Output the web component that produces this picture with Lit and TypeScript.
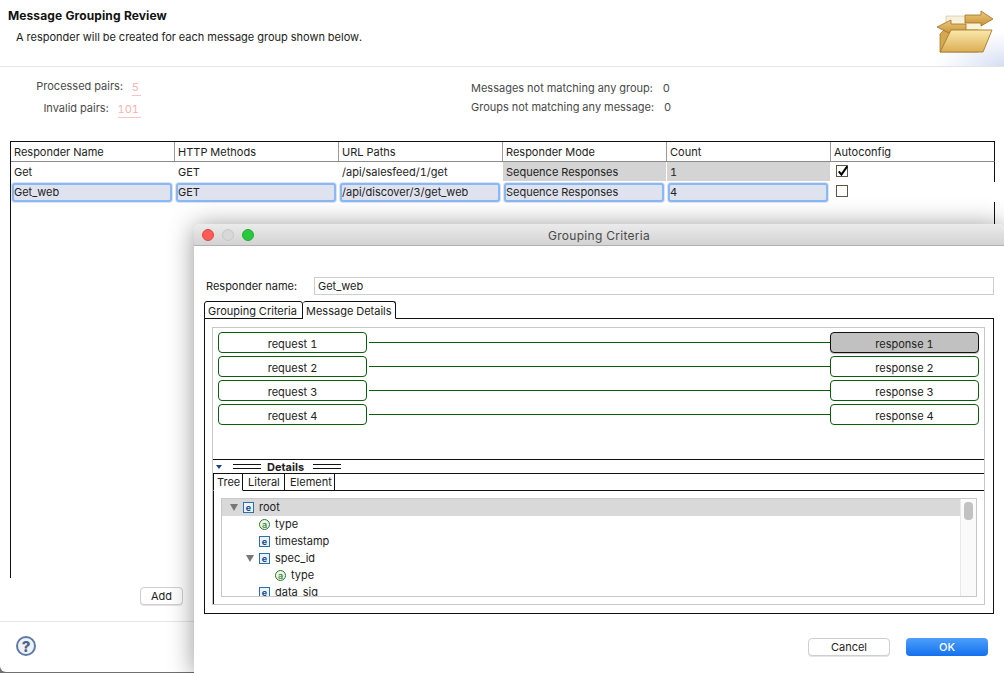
import { LitElement, html, css } from "lit";
import { customElement } from "lit/decorators.js";

const COLS = ["Responder Name", "HTTP Methods", "URL Paths", "Responder Mode", "Count", "Autoconfig"];
const ROWS = [
  { cells: ["Get", "GET", "/api/salesfeed/1/get", "Sequence Responses", "1"], checked: true, focus: false },
  { cells: ["Get_web", "GET", "/api/discover/3/get_web", "Sequence Responses", "4"], checked: false, focus: true },
];
const TREE = [
  { level: 0, twist: true, kind: "e", label: "root", sel: true },
  { level: 1, twist: false, kind: "a", label: "type", sel: false },
  { level: 1, twist: false, kind: "e", label: "timestamp", sel: false },
  { level: 1, twist: true, kind: "e", label: "spec_id", sel: false },
  { level: 2, twist: false, kind: "a", label: "type", sel: false },
  { level: 1, twist: false, kind: "e", label: "data_sig", sel: false },
];

@customElement("app-root")
export class AppRoot extends LitElement {
  static styles = css`
    :host { display: block; width: 1004px; height: 673px; position: relative; overflow: hidden; background: #6f6f6f;
      font: 11px/15px Inter, "Liberation Sans", sans-serif; font-variant-numeric: tabular-nums; color: #222; }
    * { box-sizing: border-box; }
    .base { height: 672px; background: #fff; display: flex; flex-direction: column; border-radius: 0 0 6px 6px; overflow: hidden; }
    .head { height: 67px; border-bottom: 1px solid #e4e4e4; position: relative; padding: 8px 8px 0; flex: none;
      background: radial-gradient(ellipse 70px 34px at 100% 100%, #d5dff2 0%, #eef2fa 55%, #fff 100%); }
    .title { font-weight: 700; font-size: 12px; color: #111; letter-spacing: 0.1px; }
    .sub { margin: 7px 0 0 8px; color: #222; }
    .folder { position: absolute; left: 934px; top: 10px; }
    .stats { height: 74px; flex: none; display: flex; }
    .left { width: 141px; padding-top: 12px; display: flex; flex-direction: column; gap: 6px; }
    .l-row { display: flex; justify-content: flex-end; gap: 9px; color: #4a4a4a; }
    .link { color: #f5b3b3; border-bottom: 1px solid #f8c4c4; padding: 1px 2px 0 0; line-height: 15px; margin-bottom: -1px; }
    .right { margin-left: 330px; padding-top: 14px; display: flex; flex-direction: column; gap: 4px; }
    .r-row { display: flex; gap: 10px; color: #4a4a4a; }
    .table { flex: 1; margin: 0 9px 0 10px; border-left: 1px solid #111; display: flex; flex-direction: column; min-height: 0; }
    .t-head { display: grid; grid-template-columns: repeat(6, 164px); height: 21px; flex: none; border-top: 1px solid #111;
      border-right: 1px solid #111; border-bottom: 1px solid #8a8a8a; }
    .t-head div { padding: 3px 0 0 3px; border-right: 1px solid #9a9a9a; }
    .t-head div:last-child { border-right: 0; }
    .t-row { display: grid; grid-template-columns: repeat(5, 164px) 1fr; height: 20px; flex: none; }
    .t-row.first { border-right: 1px solid #111; }
    .cell { padding: 3px 0 0 3px; border-bottom: 1px solid #fff; border-right: 1px solid #fff; }
    .cell.shade { background: #d4d4d4; }
    .cell.focus { background: #dfe3ef; border: 2px solid #88b9f5; border-radius: 3px; margin: 1px 3px 1px 1px; padding: 0;
      box-shadow: 0 0 0 1px #dfe3ef; line-height: 15px; }
    .check { padding: 3px 0 0 5px; }
    .box { width: 12px; height: 12px; border: 1px solid #5a5a44; background: #fff; display: block; position: relative; }
    .box svg { position: absolute; left: 0; top: -1px; }
    .t-rest { flex: 1; border-right: 1px solid #111; }
    .add-row { height: 43px; flex: none; padding: 9px 0 0 140px; }
    .btn { display: flex; align-items: center; justify-content: center; height: 18px; background: #fff; border: 1px solid #cfcfcf;
      border-radius: 4px; color: #222; box-shadow: 0 1px 0 #e4e4e4; }
    .add { width: 43px; }
    .foot { height: 51px; flex: none; border-top: 1px solid #e6e6e6; padding: 14px 0 0 16px; }
    .help { width: 20px; height: 20px; border-radius: 50%; border: 2px solid #5f7ba6; background: #eef1f6;
      display: flex; align-items: center; justify-content: center; font-weight: 800; font-size: 15px; color: #4d648a; }

    .dlg { position: absolute; left: 194px; top: 224px; width: 810px; height: 449px; background: #fff; border-radius: 6px 6px 0 0;
      box-shadow: 0 2px 26px rgba(0,0,0,.42); display: flex; flex-direction: column; }
    .bar { height: 22px; flex: none; background: linear-gradient(#ebebeb, #d3d3d3); border-bottom: 1px solid #b1b1b1;
      border-radius: 6px 6px 0 0; position: relative; display: flex; align-items: center; justify-content: center; color: #4a4a4a;
      font-size: 12px; letter-spacing: .3px; padding-top: 2px; }
    .lights { position: absolute; left: 8px; top: 5px; display: flex; gap: 8px; }
    .lights i { width: 12px; height: 12px; border-radius: 50%; display: block; }
    .r { background: #fc5b57; border: 1px solid #e3463f; }
    .y { background: #d8d8d8; border: 1px solid #c6c6c6; }
    .g { background: #2ac83f; border: 1px solid #1fae2f; }
    .name { display: flex; align-items: center; height: 18px; margin: 31px 0 6px 12px; flex: none; }
    .name label { width: 108px; }
    .input { width: 680px; height: 18px; border: 1px solid #cdcdcd; padding: 1px 0 0 3px; }
    .tabs { display: flex; height: 18px; margin-bottom: -1px; position: relative; flex: none; }
    .tab { border: 1px solid #111; border-radius: 3px 3px 0 0; padding: 2px 0 0 3px; background: #fff; }
    .tabs.outer { margin-left: 10px; }
    .tab.on { border-bottom-color: #fff; }
    .tab + .tab { border-left: 0; }
    .w-gc { width: 99px; }
    .w-md { width: 93px; }
    .w-tr { width: 30px; }
    .w-li { width: 42px; }
    .w-el { width: 50px; }
    .panel { margin-left: 10px; width: 790px; height: 296px; border: 1px solid #111; padding: 8px 8px 8px 7px; flex: none; }
    .inner { border: 1px solid #c8c8c8; height: 100%; display: flex; flex-direction: column; }
    .graph { height: 131px; flex: none; padding: 4px 5px 0; display: flex; flex-direction: column; gap: 3px; }
    .pair { display: flex; align-items: center; height: 21px; }
    .node { width: 149px; height: 21px; flex: none; border: 1px solid #0a5e0a; border-radius: 4px; display: flex; align-items: center; justify-content: center;
      color: #222; padding-top: 4px; }
    .node.sel { background: #c1c1c1; border-color: #111; box-shadow: 0 1px 1px rgba(0,0,0,.25); }
    .wire { flex: 1; height: 1px; background: #0a5e0a; margin-left: 2px; }
    .dbar { height: 15px; flex: none; border-top: 1px solid #111; border-bottom: 1px solid #111; display: flex; align-items: center; padding-left: 3px; }
    .tri { width: 0; height: 0; border-left: 3.5px solid transparent; border-right: 3.5px solid transparent; border-top: 4px solid #1a3f7c; margin-right: 11px; }
    .grip { width: 28px; height: 5px; border-top: 1px solid #111; border-bottom: 1px solid #111; }
    .dtitle { font-weight: 700; margin: 0 6px; color: #222; width: 40px; padding-top: 2px; }
    .lower { flex: 1; min-height: 0; display: flex; flex-direction: column; }
    .tabs.sm { height: 17px; margin-bottom: 0; }
    .tabs.sm .tab { border-top: 0; border-radius: 0; padding: 1px 0 0 4px; border-bottom: 1px solid #111; }
    .tabs.sm .tab.on { border-bottom-color: #fff; padding-left: 3px; }
    .tabs.sm .tab + .tab { padding-left: 5px; }
    .tabs.sm .fill { flex: 1; border-bottom: 1px solid #111; }
    .treep { flex: 1; min-height: 0; border-left: 1px solid #111; padding: 7px 7px 8px 7px; }
    .tree { height: 99px; border: 1px solid #c8c8c8; display: flex; overflow: hidden; }
    .rows { flex: 1; overflow: hidden; }
    .row { height: 17px; display: flex; align-items: center; flex: none; }
    .row.sel { background: #d9d9d9; }
    .twist { width: 8px; margin-right: 5px; flex: none; height: 7px; }
    .twist.t { width: 0; border-left: 4px solid transparent; border-right: 4px solid transparent; border-top: 7px solid #777; margin-right: 5px; box-sizing: content-box; height: 0; }
    .ico { width: 11px; height: 11px; flex: none; margin-right: 5px; display: flex; align-items: center; justify-content: center; font-size: 9px; font-weight: 700; line-height: 9px; }
    .ico.e { border: 1px solid #2f6fa8; background: #eaf2fa; color: #134a8e; }
    .ico.a { border: 1px solid #2a7a2a; border-radius: 50%; background: #edf6ea; color: #2a7a2a; font-weight: 500; }
    .sb { width: 16px; flex: none; background: #fafafa; border-left: 1px solid #e8e8e8; padding: 3px 0 0 3px; }
    .thumb { width: 9px; height: 18px; border-radius: 4px; background: #c2c2c2; }
    .actions { display: flex; justify-content: flex-end; gap: 16px; padding: 24px 16px 0 0; flex: none; }
    .actions .btn { width: 82px; }
    .ok { background: linear-gradient(#4ea0fb, #1470ee); border: 0; color: #fff; font-weight: 500; box-shadow: none; }
  `;

  private folder() {
    return html`<svg class="folder" width="64" height="46" viewBox="0 0 64 46">
      <defs>
        <linearGradient id="fb" x1="0" y1="0" x2="0" y2="1"><stop offset="0" stop-color="#fbe9ac"/><stop offset="1" stop-color="#dcae55"/></linearGradient>
        <linearGradient id="ab" x1="0" y1="0" x2="0" y2="1"><stop offset="0" stop-color="#ecca7c"/><stop offset="1" stop-color="#c99238"/></linearGradient>
      </defs>
      <path d="M12 6h22v26H12z" fill="#f7f0dc" stroke="#cdbd90" stroke-width=".6"/>
      <path d="M18 11h30v20H18z" fill="#fbf3d6"/>
      <path d="M6 24v18h38V20H10z" fill="#d5a84e" stroke="#9c7428" stroke-width=".7"/>
      <path d="M31 5h16V1l12 8-12 7v-3H31z" fill="url(#ab)" stroke="#9c6f22" stroke-width=".8"/>
      <path d="M32 14H17v-4L3 17l14 7v-3h15z" fill="url(#ab)" stroke="#9c6f22" stroke-width=".8"/>
      <path d="M6 42l11-22h41l-9 22z" fill="url(#fb)" stroke="#a57b2a" stroke-width=".9"/>
    </svg>`;
  }

  private check() {
    return html`<svg width="12" height="12" viewBox="0 0 12 12"><path d="M1.8 6.4l2.6 3.2L10.2 1.4" fill="none" stroke="#000" stroke-width="2"/></svg>`;
  }

  render() {
    return html`
      <div class="base">
        <div class="head">
          <div class="title">Message Grouping Review</div>
          <div class="sub">A responder will be created for each message group shown below.</div>
          ${this.folder()}
        </div>
        <div class="stats">
          <div class="left">
            <div class="l-row"><span>Processed pairs:</span><span class="link">5</span></div>
            <div class="l-row"><span>Invalid pairs:</span><span class="link">101</span></div>
          </div>
          <div class="right">
            <div class="r-row"><span>Messages not matching any group:</span><span>0</span></div>
            <div class="r-row"><span>Groups not matching any message:</span><span>0</span></div>
          </div>
        </div>
        <div class="table">
          <div class="t-head">${COLS.map((c) => html`<div>${c}</div>`)}</div>
          ${ROWS.map((r) => html`
            <div class="t-row ${r.focus ? "" : "first"}">
              ${r.cells.map((c, i) => html`<div class="cell ${r.focus ? "focus" : i >= 3 ? "shade" : ""}">${c}</div>`)}
              <div class="check"><span class="box">${r.checked ? this.check() : ""}</span></div>
            </div>`)}
          <div class="t-rest"></div>
        </div>
        <div class="add-row"><div class="btn add">Add</div></div>
        <div class="foot"><div class="help">?</div></div>
      </div>

      <div class="dlg">
        <div class="bar">
          <div class="lights"><i class="r"></i><i class="y"></i><i class="g"></i></div>
          Grouping Criteria
        </div>
        <div class="name"><label>Responder name:</label><div class="input">Get_web</div></div>
        <div class="tabs outer"><div class="tab w-gc">Grouping Criteria</div><div class="tab on w-md">Message Details</div></div>
        <div class="panel">
          <div class="inner">
            <div class="graph">
              ${[1, 2, 3, 4].map((n) => html`
                <div class="pair">
                  <div class="node">request ${n}</div>
                  <div class="wire"></div>
                  <div class="node ${n === 1 ? "sel" : ""}">response ${n}</div>
                </div>`)}
            </div>
            <div class="dbar"><span class="tri"></span><span class="grip"></span><span class="dtitle">Details</span><span class="grip"></span></div>
            <div class="lower">
              <div class="tabs sm"><div class="tab on w-tr">Tree</div><div class="tab w-li">Literal</div><div class="tab w-el">Element</div><div class="fill"></div></div>
              <div class="treep">
                <div class="tree">
                  <div class="rows">
                    ${TREE.map((t) => html`
                      <div class="row ${t.sel ? "sel" : ""}" style="padding-left:${8 + t.level * 16}px">
                        <span class="twist ${t.twist ? "t" : ""}"></span>
                        <span class="ico ${t.kind}">${t.kind}</span>
                        <span>${t.label}</span>
                      </div>`)}
                  </div>
                  <div class="sb"><div class="thumb"></div></div>
                </div>
              </div>
            </div>
          </div>
        </div>
        <div class="actions"><div class="btn">Cancel</div><div class="btn ok">OK</div></div>
      </div>
    `;
  }
}
